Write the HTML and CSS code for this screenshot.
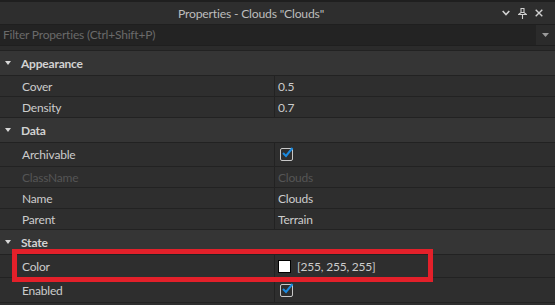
FILE: index.html
```html
<!DOCTYPE html>
<html>
<head>
<meta charset="utf-8">
<link rel="stylesheet" href="styles.css">
</head>
<body>
<div class="panel">
  <div class="topline"></div>
  <div class="titlebar">
    <span class="title">Properties - Clouds "Clouds"</span>
    <div class="tools">
      <svg class="tool" width="8" height="6" viewBox="0 0 8 6"><path d="M0.7 1 L4 4.5 L7.3 1" fill="none" stroke="#d0d0d0" stroke-width="1.6"/></svg>
      <svg class="tool" width="9" height="11" viewBox="0 0 9 11"><path d="M2.5 0.5 H6.5 M3 0.5 V4.5 M6 0.5 V4.5 M0.5 6.5 H8.5 L6 4.5 H3 Z M4.5 6.5 V11" fill="none" stroke="#d0d0d0" stroke-width="1.1"/></svg>
      <svg class="tool" width="8" height="8" viewBox="0 0 8 8"><path d="M0.7 0.7 L7.3 7.3 M7.3 0.7 L0.7 7.3" fill="none" stroke="#d0d0d0" stroke-width="1.4"/></svg>
    </div>
  </div>
  <div class="filter">
    <div class="filter-input">Filter Properties (Ctrl+Shift+P)</div>
    <div class="filter-drop"><svg width="7" height="4" viewBox="0 0 7 4"><path d="M0 0 H7 L3.5 4 Z" fill="#9a9a9a"/></svg></div>
  </div>
  <div class="gap"></div>
  <div class="props">
    <div class="header"><span class="tri"></span><span>Appearance</span></div>
    <div class="row r21"><div class="label">Cover</div><div class="value">0.5</div></div>
    <div class="row r21"><div class="label">Density</div><div class="value">0.7</div></div>
    <div class="header"><span class="tri"></span><span>Data</span></div>
    <div class="row r24"><div class="label">Archivable</div><div class="value"><span class="check"><svg width="14" height="14" viewBox="0 0 14 14"><path d="M3 7 L6 10 L12.5 2" fill="none" stroke="#1a8ae0" stroke-width="2"/></svg></span></div></div>
    <div class="row r21 disabled"><div class="label">ClassName</div><div class="value">Clouds</div></div>
    <div class="row r21"><div class="label">Name</div><div class="value">Clouds</div></div>
    <div class="row r21"><div class="label">Parent</div><div class="value">Terrain</div></div>
    <div class="header"><span class="tri"></span><span>State</span></div>
    <div class="row r23"><div class="label">Color</div><div class="value"><span class="swatch"></span><span>[255, 255, 255]</span></div></div>
    <div class="row r25"><div class="label">Enabled</div><div class="value"><span class="check"><svg width="14" height="14" viewBox="0 0 14 14"><path d="M3 7 L6 10 L12.5 2" fill="none" stroke="#1a8ae0" stroke-width="2"/></svg></span></div></div>
  </div>
  <div class="highlight"></div>
</div>
</body>
</html>
```
FILE: styles.css
```css
html, body {
  margin: 0;
  padding: 0;
  background: #2e2e2e;
}
.panel {
  position: relative;
  width: 555px;
  height: 305px;
  overflow: hidden;
  background: #2e2e2e;
  font-family: "Lato", "Open Sans", sans-serif;
  font-size: 12px;
  letter-spacing: -0.2px;
  color: #cccccc;
}
.topline {
  height: 2px;
  background: #1f1f1f;
}
.titlebar {
  display: flex;
  align-items: center;
  height: 22px;
  background: #2e2e2e;
  border-bottom: 1px solid #1f1f1f;
}
.title {
  flex: 1;
  text-align: center;
  color: #bdbdbd;
  font-size: 12.2px;
}
.tools {
  width: 53px;
  display: flex;
  align-items: center;
  gap: 8px;
}
.filter {
  display: flex;
  height: 20px;
  background: #2b2b2b;
  border-bottom: 1px solid #1f1f1f;
}
.filter-input {
  flex: 1;
  background: #232323;
  color: #6a6a6a;
  padding-left: 3px;
  line-height: 20px;
}
.filter-drop {
  width: 19px;
  display: flex;
  align-items: center;
  justify-content: center;
}
.gap {
  height: 4px;
  background: #2b2b2b;
  border-bottom: 1px solid #222;
}
.header {
  display: flex;
  align-items: center;
  height: 24px;
  background: #353535;
  border-bottom: 1px solid #222;
  font-weight: bold;
  color: #d2d2d2;
}
.tri {
  width: 0;
  height: 0;
  border-left: 3.5px solid transparent;
  border-right: 3.5px solid transparent;
  border-top: 4px solid #d8d8d8;
  margin-left: 5px;
  margin-right: 10px;
}
.row {
  display: grid;
  grid-template-columns: 275px 1fr;
  border-bottom: 1px solid #222;
}
.r21 { height: 20px; }
.r23 { height: 22px; }
.r24 { height: 23px; }
.r25 { height: 24px; }
.label {
  display: flex;
  align-items: center;
  padding-left: 22px;
  border-right: 1px solid #222;
}
.value {
  display: flex;
  align-items: center;
  padding-left: 3px;
  gap: 6px;
}
.disabled .label, .disabled .value {
  color: #555555;
}
.check {
  position: relative;
  width: 11px;
  height: 11px;
  border: 1px solid #c8c8c8;
  border-radius: 2px;
  margin-left: 2px;
}
.check svg {
  position: absolute;
  left: -1px;
  top: -3px;
}
.swatch {
  width: 11px;
  height: 11px;
  background: #ffffff;
  border: 1px solid #000;
}
.highlight {
  position: absolute;
  left: 12px;
  top: 249px;
  width: 411px;
  height: 23px;
  border: 5px solid #e3202a;
}
```
